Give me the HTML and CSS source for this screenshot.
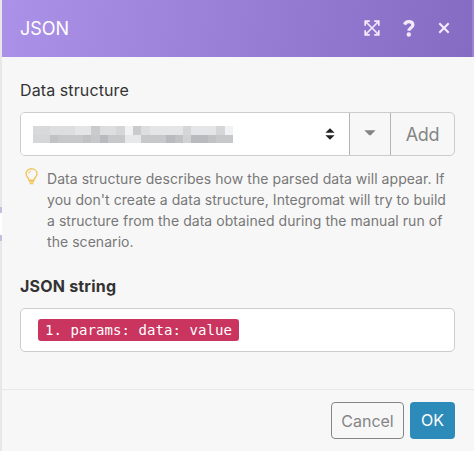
FILE: index.html
```html
<!DOCTYPE html>
<html lang="en">
<head>
    <meta charset="UTF-8">
    <title>JSON</title>
    <link rel="stylesheet" href="styles.css">
</head>
<body>
    <div class="modal">
        <div class="header">
            <span class="title">JSON</span>
            <svg class="icon-expand" width="16" height="16" viewBox="0 0 16 16">
                <path d="M2 2L14 14M14 2L2 14" stroke="#f3e9fb" stroke-width="1.6"/>
                <path d="M0.8 5.8V0.8H5.8zM10.2 0.8H15.2V5.8zM15.2 10.2V15.2H10.2zM5.8 15.2H0.8V10.2z" fill="#f3e9fb" fill-opacity="0.3"/>
                <path d="M1.2 5.8V1.2H5.8M10.2 1.2H14.8V5.8M14.8 10.2V14.8H10.2M5.8 14.8H1.2V10.2" fill="none" stroke="#f3e9fb" stroke-width="1.7"/>
            </svg>
            <svg class="icon-help" width="12" height="17" viewBox="0 0 12 17">
                <path d="M1.6 4.6C2.3 2.6 3.8 1.7 5.8 1.7C8.2 1.7 9.9 3 9.9 5C9.9 7.9 6 7.6 6 10.8" fill="none" stroke="#f3e9fb" stroke-width="3.2"/>
                <circle cx="5.8" cy="14.5" r="2.2" fill="#f3e9fb"/>
            </svg>
            <svg class="icon-close" width="12" height="12" viewBox="0 0 12 12">
                <path d="M1.3 1.3L10.7 10.7M10.7 1.3L1.3 10.7" stroke="#f3e9fb" stroke-width="2.2"/>
            </svg>
        </div>

        <div class="content">
            <label class="label">Data structure</label>
            <div class="group">
                <div class="select">
                    <svg class="masked" width="200" height="17" viewBox="0 0 24 2" preserveAspectRatio="none" shape-rendering="crispEdges">
                        <path fill="#dddee0" d="M0 0H24V1H0z"/>
                        <path fill="#d8d9db" d="M0 0H2V1H0z"/>
                        <path fill="#e4e5e7" d="M5 0H7V1H5zM14 0H18V1H14zM19 0H22V1H19z"/>
                        <path fill="#c9cbcd" d="M7 0H8V1H7zM12 0H13V1H12z"/>
                        <path fill="#d4d6d8" d="M10 0H11V1H10zM18 0H19V1H18zM22 0H23V1H22z"/>
                        <path fill="#f1f2f3" d="M11 0H12V1H11zM23 0H24V1H23z"/>
                        <path fill="#c6c8ca" d="M0 1H24V2H0z"/>
                        <path fill="#d5d6d8" d="M0 1H2V2H0z"/>
                        <path fill="#c0c2c4" d="M2 1H3V2H2zM6 1H7V2H6zM17 1H18V2H17zM21 1H22V2H21z"/>
                        <path fill="#b8bbbe" d="M8 1H9V2H8zM16 1H17V2H16zM19 1H21V2H19z"/>
                        <path fill="#e7e8ea" d="M11 1H13V2H11z"/>
                        <path fill="#d0d2d4" d="M18 1H19V2H18z"/>
                    </svg>
                    <svg width="10" height="12" viewBox="0 0 10 12">
                        <path d="M0.4 4.8L5 0.3L9.6 4.8zM0.4 7.2L5 11.7L9.6 7.2z" fill="#222"/>
                    </svg>
                </div>
                <div class="dropdown">
                    <svg width="12" height="6" viewBox="0 0 12 6">
                        <path d="M0.4 0.2H11.6L7 5.1Q6 6 5 5.1z" fill="#858585"/>
                    </svg>
                </div>
                <div class="add">Add</div>
            </div>

            <div class="help">
                <svg width="13" height="17" viewBox="0 0 13 17" fill="none" stroke="#f0c75e">
                    <path d="M4 12.2C4 9.6 1 8.8 1 5.7C1 2.8 3.4 0.8 6.5 0.8S12 2.8 12 5.7C12 8.8 9 9.6 9 12.2z" stroke-width="1.4"/>
                    <path d="M3.6 5.6C3.7 4.2 4.7 3.4 6 3.3" stroke-width="1"/>
                    <path d="M4 13.8H9M4.6 15.6H8.4" stroke-width="1.4"/>
                </svg>
                <p>Data structure describes how the parsed data will appear. If<br>
                you don't create a data structure, Integromat will try to build<br>
                a structure from the data obtained during the manual run of<br>
                the scenario.</p>
            </div>

            <label class="label bold">JSON string</label>
            <div class="input"><span class="pill">1. params: data: value</span></div>
        </div>

        <div class="footer">
            <div class="btn cancel">Cancel</div>
            <div class="btn ok">OK</div>
        </div>
    </div>
</body>
</html>
```

FILE: styles.css
```css
* {
    box-sizing: border-box;
}
body {
    margin: 0;
    height: 451px;
    overflow: hidden;
    padding: 0 0 0 2px;
    font-family: Inter, "Liberation Sans", sans-serif;
    /* canvas edge behind the dialog */
    background: linear-gradient(#e8e8ea 207px, #c3bcdc 207px, #c3bcdc 213px, #fff 213px, #fff 235px, #c3bcdc 235px, #c3bcdc 241px, #e8e8ea 241px);
}
.modal {
    display: flex;
    flex-direction: column;
    height: 451px;
    background-color: #f7f7f7;
}
.header {
    display: flex;
    align-items: center;
    height: 57px;
    padding: 0 24px 1px 18px;
    background: linear-gradient(100deg, #ab92e8, #866bc2);
    border-right: 2px solid #9a83cf;
}
.title {
    flex: 1;
    color: #fff;
    font-size: 18px;
}
.icon-help {
    margin: 0 23px;
}
.icon-close {
    margin-right: -2px;
}
.content {
    height: 332px;
    padding: 22px 19px 0 18px;
}
.label {
    display: block;
    height: 33px;
    line-height: 22px;
    font-size: 16px;
    letter-spacing: 0.1px;
    color: #333;
}
.group {
    display: flex;
    height: 44px;
    border: 1px solid #ccc;
    border-radius: 5px;
}
.select {
    flex: 1;
    display: flex;
    align-items: center;
    justify-content: space-between;
    padding: 0 14px 0 12px;
    background-color: #fff;
    border-radius: 4px 0 0 4px;
}
.dropdown {
    display: flex;
    align-items: center;
    justify-content: center;
    width: 42px;
    padding-bottom: 2px;
    border-left: 1px solid #b5b5b5;
    border-right: 1px solid #b5b5b5;
}
.add {
    width: 63px;
    text-align: center;
    line-height: 43px;
    font-size: 18px;
    letter-spacing: -0.3px;
    color: #858585;
}
.help {
    display: flex;
    height: 119px;
    padding: 12px 0 0 5px;
    gap: 9px;
}
.help p {
    margin: 0;
    white-space: nowrap;
    font-size: 14px;
    line-height: 21px;
    letter-spacing: 0.05px;
    color: #777;
}
.bold {
    font-weight: 700;
    letter-spacing: 0.2px;
}
.input {
    display: flex;
    align-items: center;
    height: 44px;
    padding-left: 17px;
    background-color: #fff;
    border: 1px solid #ccc;
    border-radius: 5px;
}
.pill {
    height: 22px;
    padding: 0 7px;
    line-height: 22px;
    font-family: "DejaVu Sans Mono", monospace;
    font-size: 14px;
    letter-spacing: 0.07px;
    white-space: pre;
    color: #fff;
    background-color: #c9355f;
    border-radius: 3px;
}
.footer {
    display: flex;
    justify-content: flex-end;
    gap: 6px;
    height: 62px;
    padding: 12px 19px 0 0;
    border-top: 1px solid #e9e9e9;
}
.btn {
    height: 37px;
    line-height: 37px;
    font-size: 16px;
    text-align: center;
    border-radius: 4px;
}
.cancel {
    width: 73px;
    line-height: 36px;
    color: #858585;
    border: 1px solid #858585;
}
.ok {
    width: 45px;
    color: #fff;
    background-color: #2d8bba;
}
```
